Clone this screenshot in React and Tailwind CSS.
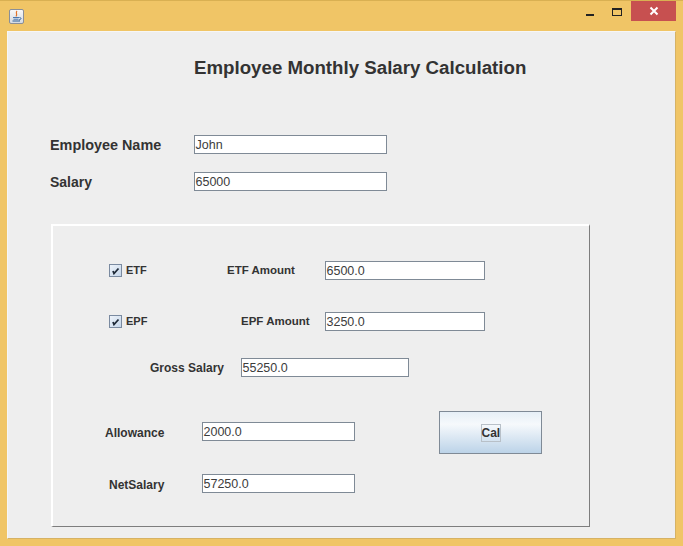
function Field({ value, width }) {
  return (
    <div className={`${width} h-[19px] shrink-0 bg-white border border-[#7f8a96] pl-[0.5px] pt-[1px] text-[12.5px] leading-[17px] text-[#3c3c3c]`}>
      {value}
    </div>
  );
}

function Check({ label }) {
  return (
    <div className="flex items-center gap-[4px] w-[118px] text-[11px] font-bold text-[#333333]">
      <span className="w-[13px] h-[13px] flex items-center justify-center border border-[#7a8aa0] bg-gradient-to-br from-[#eef3f9] to-[#c5d6ea]">
        <svg width="9" height="9" viewBox="0 0 9 9">
          <path d="M2 5 L3 7.5 L7.5 2.5" fill="none" stroke="#1f2a38" strokeWidth="1.8" />
        </svg>
      </span>
      {label}
    </div>
  );
}

function JavaIcon() {
  return (
    <div className="w-[15px] h-[15px] rounded-[2px] border border-[#8a8f98] bg-gradient-to-b from-[#f8f8f8] to-[#d5dbe3] flex items-center justify-center">
      <svg width="13" height="13" viewBox="0 0 13 13" fill="none">
        <path d="M7 1 C5 3 8 4 6 6.5" stroke="#e2732a" strokeWidth="1.2" />
        <path d="M3 7.5 H9 M3.5 9.2 H8.5" stroke="#4a78b0" strokeWidth="1" />
        <path d="M2.5 11 H10 M9.5 7.5 C11.5 7.5 11.5 9.5 9 10" stroke="#2f6098" strokeWidth="1" />
      </svg>
    </div>
  );
}

export default function App() {
  return (
    <div className="w-[683px] h-[546px] bg-[#f0c566] flex flex-col font-['Liberation_Sans',sans-serif] border-t border-[#d9b052]">
      <div className="h-[30px] shrink-0 flex items-center justify-between pl-[9px] pr-[7px]">
        <JavaIcon />
        <div className="flex items-start self-start">
          <div className="w-[27px] h-[20px] flex justify-center pt-[13px]">
            <div className="w-[8px] h-[2px] bg-[#222222]" />
          </div>
          <div className="w-[28px] h-[20px] flex justify-center pt-[7px]">
            <div className="w-[10px] h-[8px] border border-[#222222] border-t-2" />
          </div>
          <div className="w-[45px] h-[20px] bg-[#c75050] flex items-center justify-center">
            <svg width="10" height="10" viewBox="0 0 10 10">
              <path d="M1.5 1.5 L8.5 8.5 M8.5 1.5 L1.5 8.5" stroke="white" strokeWidth="2" />
            </svg>
          </div>
        </div>
      </div>

      <div className="mx-[7px] mb-[7px] flex-1 bg-[#eeeeee] border-t border-l border-[#f6f6f6] border-r-[#d6b264] border-b-[#d6b264] border-r border-b">
        <h1 className="pl-[186px] pt-[25px] text-[18.7px] leading-[22px] font-bold text-[#333333]">
          Employee Monthly Salary Calculation
        </h1>

        <div className="pl-[42px] pt-[56px] flex flex-col gap-[18px]">
          <div className="flex items-center h-[19px]">
            <div className="w-[144px] pt-[2px] text-[14.4px] leading-[21px] font-bold text-[#333333]">Employee Name</div>
            <Field value="John" width="w-[193px]" />
          </div>
          <div className="flex items-center h-[19px]">
            <div className="w-[144px] pt-[2px] text-[14px] leading-[21px] font-bold text-[#333333]">Salary</div>
            <Field value="65000" width="w-[193px]" />
          </div>
        </div>

        <div className="ml-[43px] mt-[33px] w-[539px] h-[303px] border-2 border-white border-r-[#7d7d7d] border-b-[#7d7d7d] border-r border-b flex flex-col">
          <div className="pl-[56px] pt-[35px] flex items-center">
            <Check label="ETF" />
            <div className="w-[98px] text-[11.5px] font-bold text-[#333333]">ETF Amount</div>
            <Field value="6500.0" width="w-[160px]" />
          </div>
          <div className="pl-[56px] pt-[32px] flex items-center">
            <Check label="EPF" />
            <div className="w-[98px] pl-[14px] text-[11.5px] font-bold text-[#333333]">EPF Amount</div>
            <Field value="3250.0" width="w-[160px]" />
          </div>
          <div className="pl-[97px] pt-[27px] flex items-center">
            <div className="w-[91px] text-[12px] font-bold text-[#333333]">Gross Salary</div>
            <Field value="55250.0" width="w-[168px]" />
          </div>
          <div className="pt-[34px] flex items-start">
            <div className="w-[386px] pt-[11px] flex flex-col gap-[33px]">
              <div className="flex items-center h-[19px] pl-[52px]">
                <div className="w-[97px] pt-[3px] text-[12px] leading-[15px] font-bold text-[#333333]">Allowance</div>
                <Field value="2000.0" width="w-[153px]" />
              </div>
              <div className="flex items-center h-[19px] pl-[56px]">
                <div className="w-[93px] pt-[3px] text-[12px] leading-[15px] font-bold text-[#333333]">NetSalary</div>
                <Field value="57250.0" width="w-[153px]" />
              </div>
            </div>
            <button className="w-[103px] h-[43px] border border-[#7f8a96] bg-gradient-to-b from-[#e6eff7] via-[#f6f9fc] via-30% to-[#bcd3e8] flex items-center justify-center">
              <span className="w-[20px] h-[18px] border border-[#b8c0c8] text-center text-[12px] leading-[16px] font-bold text-[#333333]">Cal</span>
            </button>
          </div>
        </div>
      </div>
    </div>
  );
}
